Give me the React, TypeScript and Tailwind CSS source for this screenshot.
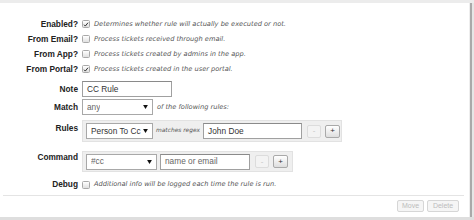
import React from 'react';

const label =
  "w-[78px] shrink-0 text-right font-bold text-[8.3px] leading-none text-[#222]";
const desc =
  "whitespace-nowrap font-['DejaVu_Sans',sans-serif] italic text-[6.65px] leading-none text-[#555]";

function Check({ checked = false }: { checked?: boolean }) {
  return (
    <span className="flex h-[8px] w-[8px] shrink-0 items-center justify-center rounded-[1.5px] border border-[#a9a9a9] bg-linear-to-b from-white to-[#e0e0e0]">
      {checked ? (
        <svg viewBox="0 0 8 8" className="h-[7px] w-[7px]" aria-hidden>
          <path d="M1.4 4.3 L3.1 6.1 L6.7 1.6" fill="none" stroke="#2a2a2a" strokeWidth="1.3" />
        </svg>
      ) : null}
    </span>
  );
}

function Select({ value, width, muted = false }: { value: string; width: string; muted?: boolean }) {
  return (
    <div
      className={`flex h-[16px] shrink-0 items-center justify-between overflow-hidden border border-[#a8a8a8] bg-white pl-[4px] pr-[4px] text-[8.3px] ${width} ${
        muted ? 'text-[#666]' : 'text-[#333]'
      }`}
    >
      <span className="overflow-hidden whitespace-nowrap">{value}</span>
      <svg viewBox="0 0 6 5" className="ml-[2px] h-[4px] w-[5px] shrink-0" aria-hidden>
        <polygon points="0,0 6,0 3,5" fill="#111" />
      </svg>
    </div>
  );
}

function Input({ value, width, muted = false }: { value: string; width: string; muted?: boolean }) {
  return (
    <div
      className={`flex h-[16px] shrink-0 items-center whitespace-nowrap border border-[#a0a0a0] border-t-[#8a8a8a] bg-white pl-[4px] text-[8.3px] ${width} ${
        muted ? 'text-[#666]' : 'text-[#333]'
      }`}
    >
      {value}
    </div>
  );
}

function SmallBtn({ children, disabled = false, width }: { children: React.ReactNode; disabled?: boolean; width: string }) {
  return (
    <span
      className={`flex h-[13px] items-center justify-center rounded-[2px] border text-[8px] leading-none ${width} ${
        disabled
          ? 'border-[#dcdcdc] bg-[#f3f3f3] text-[#c4c4c4]'
          : 'border-[#a9a9a9] bg-linear-to-b from-white to-[#dedede] text-[#333]'
      }`}
    >
      {children}
    </span>
  );
}

function BoolRow({ name, text, checked = false }: { name: string; text: string; checked?: boolean }) {
  return (
    <div className="flex h-[15px] items-center gap-[4px]">
      <span className={label}>{name}</span>
      <Check checked={checked} />
      <span className={desc}>{text}</span>
    </div>
  );
}

export default function App() {
  return (
    <div className="h-[220px] w-[474px] overflow-hidden bg-white font-['Liberation_Sans',Arial,sans-serif]">
      <div className="h-[3px] bg-[#ececec]" />
      <div className="flex h-[214px]">
        <div className="flex w-[470px] flex-col border-r border-r-[#eeeeee]">
          <div className="mt-[13.5px] flex flex-col">
            <BoolRow name="Enabled?" checked text="Determines whether rule will actually be executed or not." />
            <BoolRow name="From Email?" text="Process tickets received through email." />
            <BoolRow name="From App?" text="Process tickets created by admins in the app." />
            <BoolRow name="From Portal?" checked text="Process tickets created in the user portal." />
          </div>

          <div className="mt-[5px] flex h-[15px] items-center gap-[4px]">
            <span className={label}>Note</span>
            <Input value="CC Rule" width="w-[90px] h-[15px]" />
          </div>

          <div className="mt-[3px] flex h-[15px] items-center gap-[4px]">
            <span className={label}>Match</span>
            <Select value="any" width="w-[71px] h-[15px]" muted />
            <span className={desc}>of the following rules:</span>
          </div>

          <div className="mt-[5.5px] flex items-start gap-[4px]">
            <span className={`${label} pt-[3.5px]`}>Rules</span>
            <div className="flex h-[22px] w-[260px] items-center gap-[3px] border border-[#e2e2e2] bg-[#efefef] pl-[3px]">
              <Select value="Person To Cc" width="w-[67px]" />
              <span className="shrink-0 whitespace-nowrap font-['DejaVu_Sans',sans-serif] text-[5.9px] italic leading-none text-[#555]">
                matches regex
              </span>
              <Input value="John Doe" width="w-[99px] h-[15px]" />
              <div className="ml-[2px] flex gap-[4px]">
                <SmallBtn disabled width="w-[14px]">-</SmallBtn>
                <SmallBtn width="w-[15px]">+</SmallBtn>
              </div>
            </div>
          </div>

          <div className="mt-[9px] flex items-start gap-[4px]">
            <span className={`${label} pt-[2px]`}>Command</span>
            <div className="flex h-[21px] w-[211px] items-center gap-[3px] border border-[#e2e2e2] bg-[#efefef] pl-[3px]">
              <Select value="#cc" width="w-[71px] h-[15px]" muted />
              <Input value="name or email" width="w-[90px] h-[15px]" muted />
              <div className="ml-[2px] flex gap-[4px]">
                <SmallBtn disabled width="w-[14px]">-</SmallBtn>
                <SmallBtn width="w-[15px]">+</SmallBtn>
              </div>
            </div>
          </div>

          <div className="mt-[5px] flex h-[15px] items-center gap-[4px]">
            <span className={label}>Debug</span>
            <Check />
            <span className={desc}>Additional info will be logged each time the rule is run.</span>
          </div>

          <div className="ml-[3px] mr-[5px] mt-[3px] h-px bg-[#e4e4e4]" />

          <div className="mt-[4px] flex justify-end gap-[3px] pr-[10px]">
            <span className="flex h-[12px] w-[27px] items-center justify-center rounded-[2px] border border-[#d6d6d6] bg-[#f5f5f5] text-[7px] text-[#bcbcbc]">
              Move
            </span>
            <span className="flex h-[12px] w-[32px] items-center justify-center rounded-[2px] border border-[#d6d6d6] bg-[#f5f5f5] text-[7px] text-[#bcbcbc]">
              Delete
            </span>
          </div>
        </div>
        <div className="w-[2px] bg-[#a9a9a9]" />
        <div className="w-[2px] bg-[#e6e6e6]" />
      </div>
      <div className="h-[3px] bg-[#dedede]" />
    </div>
  );
}
